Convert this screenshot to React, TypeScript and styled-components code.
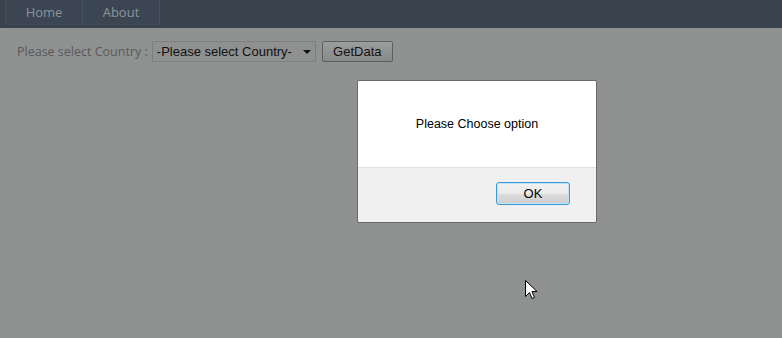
import React from "react";
import styled, { createGlobalStyle } from "styled-components";

const Global = createGlobalStyle`
  html, body { margin: 0; padding: 0; }
  body { background: #909191; width: 782px; height: 338px; overflow: hidden; font-family: "Open Sans", "Liberation Sans", sans-serif; }
`;

const Page = styled.div`
  position: relative;
  width: 782px;
  height: 338px;
  background: #909191;
`;

const Header = styled.div`
  height: 28px;
  background: #39434e;
  display: flex;
  align-items: flex-start;
  padding-left: 5px;
`;

const NavItem = styled.div<{ $first?: boolean }>`
  width: 76px;
  height: 23px;
  background: #3c4652;
  border-right: 1px solid #44505b;
  border-bottom: 1px solid #414b56;
  ${(p) => (p.$first ? "border-left: 1px solid #44505b;" : "")}
  display: flex;
  align-items: center;
  justify-content: center;
  color: #8a939d;
  font-size: 13px;
  padding-bottom: 1px;
`;

const Toolbar = styled.div`
  display: flex;
  align-items: center;
  padding: 13px 0 0 17px;
`;

const Label = styled.span`
  color: #58595a;
  font-size: 12.5px;
  margin-right: 4px;
`;

const Select = styled.div`
  width: 164px;
  height: 21px;
  box-sizing: border-box;
  border: 1px solid #7d7e7e;
  background: #8f9090;
  display: flex;
  align-items: center;
  justify-content: space-between;
  padding: 0 4px 0 4px;
  font-family: "Liberation Sans", Arial, sans-serif;
  font-size: 13px;
  color: #111;
`;

const Arrow = styled.span`
  width: 0;
  height: 0;
  border-left: 4px solid transparent;
  border-right: 4px solid transparent;
  border-top: 4px solid #111;
`;

const Button = styled.div`
  margin-left: 6px;
  width: 71px;
  height: 21px;
  box-sizing: border-box;
  border: 1px solid #5e5f60;
  border-radius: 2px;
  background: linear-gradient(#9c9d9d, #888989);
  display: flex;
  align-items: center;
  justify-content: center;
  font-family: "Liberation Sans", Arial, sans-serif;
  font-size: 13px;
  color: #111;
`;

const Dialog = styled.div`
  position: absolute;
  left: 357px;
  top: 80px;
  width: 240px;
  height: 143px;
  box-sizing: border-box;
  border: 1px solid #6a6a6a;
  border-radius: 2px;
  display: flex;
  flex-direction: column;
  overflow: hidden;
  font-family: "Liberation Sans", Arial, sans-serif;
`;

const DialogBody = styled.div`
  height: 86px;
  background: #fff;
  display: flex;
  align-items: center;
  justify-content: center;
  font-size: 12.5px;
  color: #000;
  padding-bottom: 1px;
  box-sizing: border-box;
`;

const DialogFooter = styled.div`
  flex: 1;
  background: #f0f0f0;
  border-top: 1px solid #dfdfdf;
  display: flex;
  justify-content: flex-end;
  align-items: flex-start;
  padding: 14px 26px 0 0;
`;

const OkButton = styled.div`
  width: 74px;
  height: 23px;
  box-sizing: border-box;
  border: 1px solid #3c9ad6;
  border-radius: 3px;
  box-shadow: inset 0 0 0 1px #bfe4f9;
  background: linear-gradient(#f2f2f2 0%, #ebebeb 50%, #dddddd 51%, #cfcfcf 100%);
  display: flex;
  align-items: center;
  justify-content: center;
  font-size: 13px;
  color: #000;
`;

const Cursor = styled.svg`
  position: absolute;
  left: 525px;
  top: 280px;
`;

export default function App() {
  return (
    <Page>
      <Global />
      <Header>
        <NavItem $first>Home</NavItem>
        <NavItem>About</NavItem>
      </Header>
      <Toolbar>
        <Label>Please select Country :</Label>
        <Select>
          <span>-Please select Country-</span>
          <Arrow />
        </Select>
        <Button>GetData</Button>
      </Toolbar>
      <Dialog>
        <DialogBody>Please Choose option</DialogBody>
        <DialogFooter>
          <OkButton>OK</OkButton>
        </DialogFooter>
      </Dialog>
      <Cursor width="13" height="20" viewBox="0 0 13 20">
        <path d="M0.5 0.5 L0.5 16.5 L4.5 12.5 L7 18.5 L9.5 17.5 L7 11.5 L12 11.5 Z" fill="#fff" stroke="#000" strokeWidth="1" />
      </Cursor>
    </Page>
  );
}
